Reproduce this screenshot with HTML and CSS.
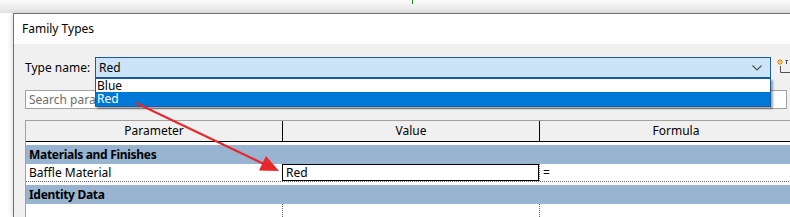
FILE: index.html
```html
<!DOCTYPE html>
<html lang="en">
<head>
  <meta charset="UTF-8">
  <title>Family Types</title>
  <link rel="stylesheet" href="styles.css">
</head>
<body>
  <div class="desk">
    <div class="tick"></div>

    <div class="window">
      <div class="titlebar">Family Types</div>

      <div class="content">
        <div class="type-row">
          <span class="label">Type name:</span>
          <div class="combo">
            <span>Red</span>
            <svg class="chevron" width="10" height="6" viewBox="0 0 10 6">
              <path d="M0.5 0.5 L5 5 L9.5 0.5" fill="none" stroke="#505050" stroke-width="1.2"/>
            </svg>
            <ul class="list">
              <li>Blue</li>
              <li class="selected">Red</li>
            </ul>
          </div>
          <svg class="new-icon" width="14" height="16" viewBox="0 0 14 16">
            <g stroke="#e8740c" stroke-width="1">
              <line x1="3" y1="0" x2="3" y2="6"/>
              <line x1="0" y1="3" x2="6" y2="3"/>
              <line x1="1" y1="1" x2="5" y2="5"/>
              <line x1="5" y1="1" x2="1" y2="5"/>
            </g>
            <circle cx="3" cy="3" r="1.3" fill="#f7d21c"/>
            <path d="M3.5 7 V13.5 H14" fill="none" stroke="#505050" stroke-width="1"/>
            <path d="M8.5 1.5 H11 M9.5 1.5 V5" fill="none" stroke="#505050" stroke-width="1"/>
          </svg>
        </div>

        <div class="search"><span>Search param</span></div>

        <div class="grid">
          <div class="head">
            <div class="hcell">Parameter</div>
            <div class="hcell">Value</div>
            <div class="hcell">Formula</div>
          </div>

          <div class="group">Materials and Finishes</div>
          <div class="row">
            <div class="cell">Baffle Material</div>
            <div class="cell editing">Red</div>
            <div class="cell">=</div>
          </div>

          <div class="group">Identity Data</div>
          <div class="row">
            <div class="cell"></div>
            <div class="cell"></div>
            <div class="cell"></div>
          </div>
        </div>
      </div>
    </div>

    <!-- annotation arrow drawn over the dialog -->
    <svg class="arrow" width="790" height="217" viewBox="0 0 790 217">
      <line x1="136" y1="103" x2="266" y2="165" stroke="#e8262b" stroke-width="2"/>
      <polygon points="279,171 259,170.5 266,156" fill="#e8262b"/>
    </svg>
  </div>
</body>
</html>
```

FILE: styles.css
```css
body {
  margin: 0;
  width: 790px;
  height: 217px;
  overflow: hidden;
  font-family: "Noto Sans", "Open Sans", sans-serif;
  font-size: 12px;
  color: #000;
}
.desk {
  position: relative;
  height: 217px;
  box-sizing: border-box;
  padding: 13px 0 0 13px;
  overflow: hidden;
  background: linear-gradient(to bottom, #fcfcfc 0, #e2e2e2 13px, #fff 13px);
}
.tick {
  position: absolute;
  left: 412px;
  top: 0;
  width: 1px;
  height: 4px;
  background: #109010;
}
.window {
  width: 800px;
  height: 100%;
  box-sizing: border-box;
  overflow: hidden;
  background: #f0f0f0;
  border-top: 1px solid #6e6e6e;
  border-left: 1px solid #6e6e6e;
  box-shadow: -2px 0 5px rgba(0, 0, 0, 0.1);
}
.titlebar {
  height: 30px;
  line-height: 30px;
  padding-left: 8px;
  background: #fff;
}
.content {
  padding: 13px 0 0 11px;
}
.type-row {
  display: flex;
  align-items: center;
  height: 21px;
}
.label {
  width: 70px;
}
.combo {
  position: relative;
  box-sizing: border-box;
  width: 676px;
  height: 21px;
  padding-left: 3px;
  line-height: 19px;
  border: 1px solid #1b5c9e;
  background: #cce4f7;
}
.chevron {
  position: absolute;
  right: 8px;
  top: 7px;
}
.list {
  position: absolute;
  left: -1px;
  top: 20px;
  box-sizing: border-box;
  width: 676px;
  margin: 0;
  padding: 0;
  list-style: none;
  border: 1px solid #1b5c9e;
  background: #fff;
  box-shadow: 2px 2px 2px rgba(0, 0, 0, 0.35);
  z-index: 2;
}
.list li {
  height: 13px;
  line-height: 13px;
  padding-left: 1px;
}
.list li.selected {
  height: 14px;
  background: #0078d7;
  color: #fff;
}
.new-icon {
  margin-left: 6px;
  margin-top: -2px;
}
.search {
  box-sizing: border-box;
  width: 762px;
  height: 19px;
  margin-top: 12px;
  padding-left: 3px;
  line-height: 17px;
  border: 1px solid #a0a0a0;
  background: #fff;
  color: #6d6d6d;
}
.grid {
  margin-top: 11px;
  height: 96px;
  border-top: 1px solid #a0a0a0;
  border-left: 1px solid #a0a0a0;
  background: #fff;
}
.head {
  display: grid;
  grid-template-columns: 257px 257px 1fr;
  height: 20px;
  background: #f0f0f0;
  border-bottom: 1px solid #000;
}
.hcell {
  text-align: center;
  line-height: 20px;
  border-right: 1px solid #000;
}
.group {
  height: 19px;
  margin-top: 3px;
  padding-left: 3px;
  line-height: 19px;
  font-weight: bold;
  letter-spacing: -0.3px;
  background: #99b4d1;
}
.row {
  display: grid;
  grid-template-columns: 257px 257px 1fr;
  height: 17px;
  border-bottom: 1px dotted #666;
}
.cell {
  padding-left: 3px;
  line-height: 17px;
  border-right: 1px dotted #666;
}
.cell.editing {
  margin-left: -1px;
  box-shadow: inset 0 0 0 1px #000;
  padding-left: 4px;
}
.row .cell:last-child {
  border-right: none;
}
.arrow {
  position: absolute;
  left: 0;
  top: 0;
  pointer-events: none;
  z-index: 5;
}
```
